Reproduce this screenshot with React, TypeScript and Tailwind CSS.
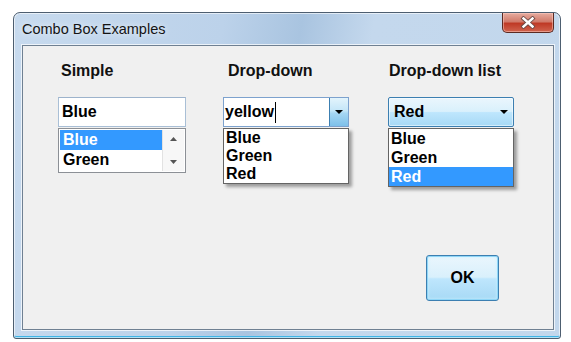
import { ReactNode } from "react";

const font = "font-['Liberation_Sans',Arial,sans-serif]";

function Arrow({ className = "" }: { className?: string }) {
  return (
    <svg width="8" height="4" viewBox="0 0 8 4" className={className}>
      <path d="M0 0H8L4 4Z" fill="#000" />
    </svg>
  );
}

function Popup({ items, selected, rowH }: { items: string[]; selected?: number; rowH: string }) {
  return (
    <div className="absolute left-0 top-[31px] w-full border border-[#646464] bg-white shadow-[3px_3px_3px_rgba(0,0,0,0.35)] z-10">
      {items.map((it, i) => (
        <div
          key={it}
          className={`${rowH} flex items-center pl-[2px] text-[16px] font-bold ${
            i === selected ? "bg-[#3399ff] text-white" : "text-black"
          }`}
        >
          {it}
        </div>
      ))}
    </div>
  );
}

function Column({ label, labelPad, width, children }: { label: string; labelPad: string; width: string; children: ReactNode }) {
  return (
    <div className={`${width} flex flex-col`}>
      <div className={`${labelPad} h-[18px] leading-[18px] text-[16px] font-bold text-[#111]`}>{label}</div>
      <div className="relative mt-[17px]">{children}</div>
    </div>
  );
}

export default function App() {
  return (
    <div className={`w-[571px] h-[342px] bg-white pt-[12px] pl-[13px] ${font}`}>
      <div className="relative w-[548px] h-[327px] rounded-t-[7px] rounded-b-[3px] border border-[#4d5e70] bg-[linear-gradient(100deg,#c7daee_0%,#bcd2ea_35%,#a9c4e0_48%,#c4d8ed_60%,#c2d7ec_100%)] flex flex-col shadow-[inset_0_0_0_1px_rgba(255,255,255,0.6),inset_0_-2px_0_#3fb4e6]">
        {/* title bar */}
        <div className="h-[32px] flex items-start justify-between">
          <div className="pl-[8px] pt-[8px] text-[14.5px] leading-[17px] text-[#141414] [text-shadow:0_0_6px_rgba(255,255,255,0.9)]">
            Combo Box Examples
          </div>
          <div className="mr-[6px] w-[52px] h-[20px] rounded-b-[5px] border border-t-0 border-[#5b2a22] bg-[linear-gradient(180deg,#e6aca0_0%,#d17b6b_45%,#bf3a26_55%,#d0644f_100%)] flex items-center justify-center shadow-[inset_0_0_0_1px_rgba(255,210,200,0.5)]">
            <svg width="16" height="13" viewBox="0 0 16 13">
              <path d="M3.5 2.5L12.5 10.5M12.5 2.5L3.5 10.5" stroke="#6a4a46" strokeWidth="4.2" strokeLinecap="square" />
              <path d="M3.5 2.5L12.5 10.5M12.5 2.5L3.5 10.5" stroke="#ffffff" strokeWidth="2.4" strokeLinecap="square" />
            </svg>
          </div>
        </div>

        {/* client area */}
        <div className="ml-[8px] mr-[6px] mb-[8px] flex-1 border border-[#6f8092] bg-[#f0f0f0] flex flex-col shadow-[0_0_0_1px_rgba(255,255,255,0.7)]">
          <div className="flex pt-[16px] pl-[35px]">
            <Column label="Simple" labelPad="pl-[3px]" width="w-[128px]">
              <div className="h-[30px] border border-[#a9bfd6] border-t-[#9db3cc] bg-white flex items-center pl-[3px] text-[16px] font-bold text-black">
                Blue
              </div>
              <div className="mt-[1px] h-[45px] border border-[#8c9096] bg-white flex p-[1px]">
                <div className="flex-1 flex flex-col">
                  <div className="h-[20px] bg-[#3399ff] text-white text-[16px] font-bold flex items-center pl-[3px]">Blue</div>
                  <div className="h-[20px] text-black text-[16px] font-bold flex items-center pl-[3px]">Green</div>
                </div>
                <div className="w-[22px] border-l border-[#e2e2e2] bg-[#f7f7f7] flex flex-col items-center justify-between py-[7px]">
                  <svg width="7" height="4" viewBox="0 0 7 4"><path d="M0 4H7L3.5 0Z" fill="#555" /></svg>
                  <svg width="7" height="4" viewBox="0 0 7 4"><path d="M0 0H7L3.5 4Z" fill="#555" /></svg>
                </div>
              </div>
            </Column>

            <div className="w-[37px]" />

            <Column label="Drop-down" labelPad="pl-[5px]" width="w-[126px]">
              <div className="h-[30px] border border-[#7da2ce] bg-white flex">
                <div className="flex-1 flex items-center pl-[1px] text-[16px] font-bold text-black">
                  yellow<span className="ml-[1px] w-[1px] h-[21px] bg-black" />
                </div>
                <div className="w-[19px] border-l border-[#3c7fb1] bg-[linear-gradient(180deg,#e3f4fc_0%,#c4e6f8_45%,#a5d6f3_55%,#7ec1ea_100%)] flex items-center justify-center">
                  <Arrow />
                </div>
              </div>
              <Popup items={["Blue", "Green", "Red"]} rowH="h-[18px]" />
            </Column>

            <div className="w-[39px]" />

            <Column label="Drop-down list" labelPad="pl-[1px]" width="w-[126px]">
              <div className="h-[30px] rounded-[2px] border border-[#3c7fb1] bg-[linear-gradient(180deg,#eaf6fd_0%,#d9f0fc_48%,#bee6fd_52%,#a7d9f5_100%)] flex items-center justify-between pl-[5px] pr-[5px] text-[16px] font-bold text-black shadow-[inset_0_0_0_1px_rgba(255,255,255,0.5)]">
                Red
                <Arrow />
              </div>
              <Popup items={["Blue", "Green", "Red"]} selected={2} rowH="h-[19px]" />
            </Column>
          </div>

          <button className="mt-auto mb-[28px] mr-[54px] self-end w-[73px] h-[46px] rounded-[3px] border border-[#3c7fb1] bg-[linear-gradient(180deg,#eaf6fd_0%,#d9f0fc_48%,#bee6fd_52%,#a7d9f5_100%)] shadow-[inset_0_0_0_1px_#8fd6f7,inset_0_0_3px_1px_#c8f0ff] text-[16px] font-bold text-black">
            OK
          </button>
        </div>
      </div>
    </div>
  );
}
